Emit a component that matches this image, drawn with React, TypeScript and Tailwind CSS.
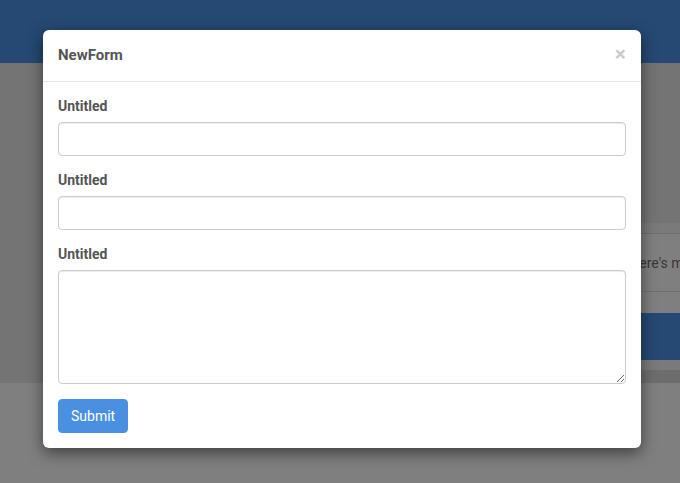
import React from "react";

function BackgroundPage() {
  return (
    <div className="flex h-full flex-col">
      <header className="h-[63px] shrink-0 bg-[#4b93e6]" />
      <section className="flex h-[320px] shrink-0 flex-col bg-[#e9e9e9] pt-[160px]">
        <div className="ml-[612px] flex w-[300px] flex-col bg-white">
          <div className="h-[11px] border-b border-[#dddddd] bg-[#f5f5f5]" />
          <div className="flex h-[58px] items-center whitespace-nowrap border-b border-[#dddddd] px-[15px] text-sm text-[#707070]">
            there's more
          </div>
          <div className="h-[21px]" />
          <div className="h-[47px] bg-[#4b93e6]" />
          <div className="h-[10px] bg-[#f5f5f5]" />
          <div className="h-[13px] bg-[#dadada]" />
        </div>
      </section>
      <div className="flex-1 bg-white" />
    </div>
  );
}

function Field({ label, multiline }: { label: string; multiline?: boolean }) {
  return (
    <div className="mb-[15px]">
      <label className="mb-[7px] block text-sm font-bold leading-[18px] text-[#555555]">
        {label}
      </label>
      {multiline ? (
        <textarea className="block h-[114px] w-full rounded border border-[#cccccc] shadow-[inset_0_1px_1px_rgba(0,0,0,0.075)]" />
      ) : (
        <input
          type="text"
          className="block h-[34px] w-full rounded border border-[#cccccc] shadow-[inset_0_1px_1px_rgba(0,0,0,0.075)]"
        />
      )}
    </div>
  );
}

export default function App() {
  return (
    <div className="relative h-[483px] w-[680px] overflow-hidden font-['Roboto',sans-serif]">
      <BackgroundPage />
      <div className="absolute inset-0 bg-black/50" />

      <div className="absolute left-[43px] top-[30px] w-[598px] rounded-md bg-white shadow-[0_5px_15px_rgba(0,0,0,0.5)]">
        <div className="flex items-center justify-between border-b border-[#e5e5e5] px-[15px] pb-[16px] pt-[14px]">
          <h4 className="text-[15px] font-bold leading-5 text-[#555555]">NewForm</h4>
          <button className="text-[21px] font-bold leading-none text-black opacity-20">
            ×
          </button>
        </div>

        <div className="p-[15px]">
          <Field label="Untitled" />
          <Field label="Untitled" />
          <Field label="Untitled" multiline />
          <button className="h-[34px] rounded border border-[#4a90e2] bg-[#4a90e2] px-3 pb-px text-sm text-white">
            Submit
          </button>
        </div>
      </div>
    </div>
  );
}
